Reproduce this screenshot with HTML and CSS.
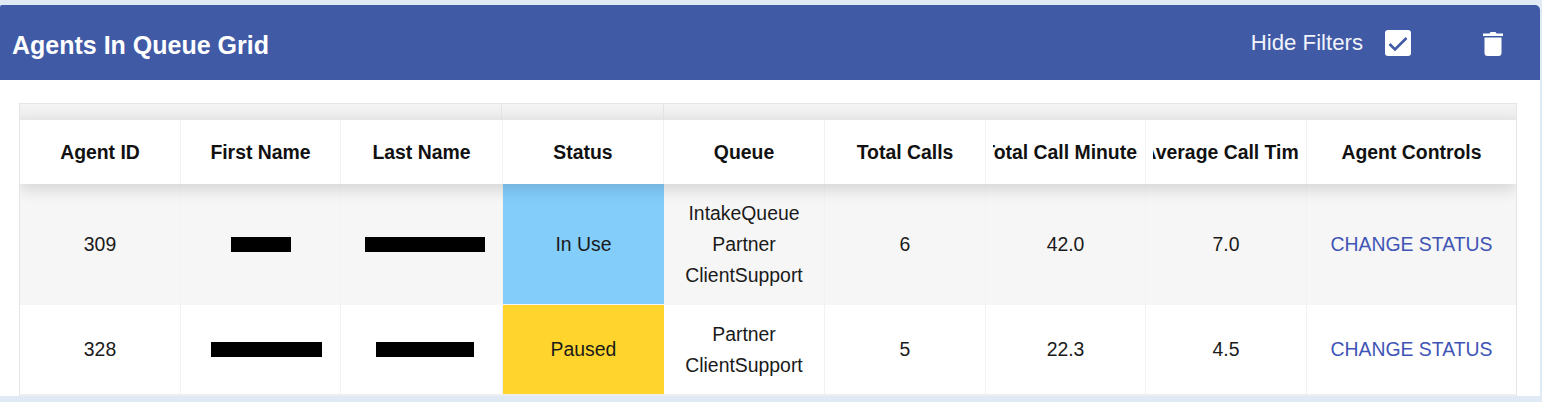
FILE: index.html
```html
<!DOCTYPE html>
<html lang="en">
<head>
<meta charset="utf-8">
<title>Agents In Queue Grid</title>
<link rel="stylesheet" href="styles.css">
</head>
<body>
<section class="panel">
  <header class="panel-head">
    <h1 class="panel-title">Agents In Queue Grid</h1>
    <div class="panel-actions">
      <span class="filter-label">Hide Filters</span>
      <svg class="check-icon" width="26" height="26" viewBox="0 0 26 26"><rect width="26" height="26" rx="3" fill="#fff"/><path d="M4.500 14l5.500 5.500L21.500 8" fill="none" stroke="#405aa6" stroke-width="2.600"/></svg>
      <svg class="trash-icon" width="20" height="26" viewBox="0 0 20 26"><path d="M0 3.500h6.500L7.500 2h5l1 1.500H20V6H0zM1.500 7.500h17V23a3 3 0 0 1-3 3h-11a3 3 0 0 1-3-3z" fill="#fff"/></svg>
    </div>
  </header>
  <div class="panel-body">
    <div class="grid">
      <div class="band">
        <div class="band-a"></div><div class="band-b"></div><div class="band-c"></div>
      </div>
      <div class="row row-head">
        <div class="cell">Agent ID</div>
        <div class="cell">First Name</div>
        <div class="cell">Last Name</div>
        <div class="cell">Status</div>
        <div class="cell">Queue</div>
        <div class="cell">Total Calls</div>
        <div class="cell clip"><div class="clip-box"><span>Total Call Minutes</span></div></div>
        <div class="cell clip"><div class="clip-box"><span>Average Call Time</span></div></div>
        <div class="cell">Agent Controls</div>
      </div>
      <div class="row row-one">
        <div class="cell">309</div>
        <div class="cell"><span class="redact r1"></span></div>
        <div class="cell"><span class="redact r2"></span></div>
        <div class="cell status in-use">In Use</div>
        <div class="cell queue"><span>IntakeQueue</span><span>Partner</span><span>ClientSupport</span></div>
        <div class="cell">6</div>
        <div class="cell">42.0</div>
        <div class="cell">7.0</div>
        <div class="cell"><a class="action">CHANGE STATUS</a></div>
      </div>
      <div class="row row-two">
        <div class="cell">328</div>
        <div class="cell"><span class="redact r3"></span></div>
        <div class="cell"><span class="redact r4"></span></div>
        <div class="cell status paused">Paused</div>
        <div class="cell queue"><span>Partner</span><span>ClientSupport</span></div>
        <div class="cell">5</div>
        <div class="cell">22.3</div>
        <div class="cell">4.5</div>
        <div class="cell"><a class="action">CHANGE STATUS</a></div>
      </div>
    </div>
  </div>
</section>
</body>
</html>
```
FILE: styles.css
```css
* { box-sizing: border-box; }
html, body { margin: 0; height: 402px; overflow: hidden; }
body {
  background: #dfeaf4;
  padding: 5px 2px 6px 0;
  font-family: "Liberation Sans", Arial, sans-serif;
  color: #1a1a1a;
}
.panel { height: 391px; display: flex; flex-direction: column; }
.panel-head {
  height: 75px;
  flex: none;
  background: #405aa6;
  border-top-right-radius: 5px;
  border-top-left-radius: 2px;
  display: flex;
  align-items: center;
  justify-content: space-between;
  padding: 0 37px 0 12px;
  color: #fff;
}
.panel-title { margin: 5px 0 0; font-size: 25px; line-height: 28px; font-weight: 700; }
.panel-actions { display: flex; align-items: center; }
.filter-label { font-size: 22.200px; margin-right: 22px; color: #f1f3fa; }
.check-icon { margin-right: 72px; }
.panel-body {
  flex: 1;
  min-height: 0;
  background: #fff;
  padding: 23px 23px 0 19px;
}
.grid {
  height: 100%;
  overflow: hidden;
  border: 1px solid #e6e6e6;
  border-bottom: 2px solid #eeeeee;
}
.band {
  height: 15px;
  display: grid;
  grid-template-columns: 482px 162px 1fr;
  background: linear-gradient(#f4f4f4, #ececec);
}
.band-a, .band-b { border-right: 1px solid #e4e4e4; }
.row {
  display: grid;
  grid-template-columns: 161px 160px 162px 161px 161px 161px 160px 161px 1fr;
}
.row-head {
  height: 65px;
  background: #fff;
  position: relative;
  z-index: 1;
  border-top: 1px solid #e6e6e6;
  box-shadow: 0 6px 14px rgba(0, 0, 0, .13);
  font-weight: 700;
  color: #111;
}
.row-one { height: 121px; background: #f6f6f6; }
.row-two { height: 89px; background: #fff; }
.cell {
  display: flex;
  align-items: center;
  justify-content: center;
  min-width: 0;
  border-right: 1px solid #f2f2f2;
  font-size: 19.400px;
}
.cell:last-child { border-right: 0; }
.clip { padding: 0 7px; white-space: nowrap; }
.clip-box { display: flex; justify-content: center; width: 100%; min-width: 0; overflow: hidden; }
.clip-box span { flex: none; }
.status { border-right: 0; }
.row-one .status { margin-bottom: 1px; }
.in-use { background: #83cdfb; }
.paused { background: #ffd42c; }
.queue { flex-direction: column; line-height: 31px; }
.action { color: #3f55b5; }
.redact { display: block; height: 15px; background: #000; }
.r1 { width: 60px; }
.r2 { width: 120px; margin-left: 6px; }
.r3 { width: 111px; margin-left: 11px; }
.r4 { width: 98px; margin-left: 6px; }
```
